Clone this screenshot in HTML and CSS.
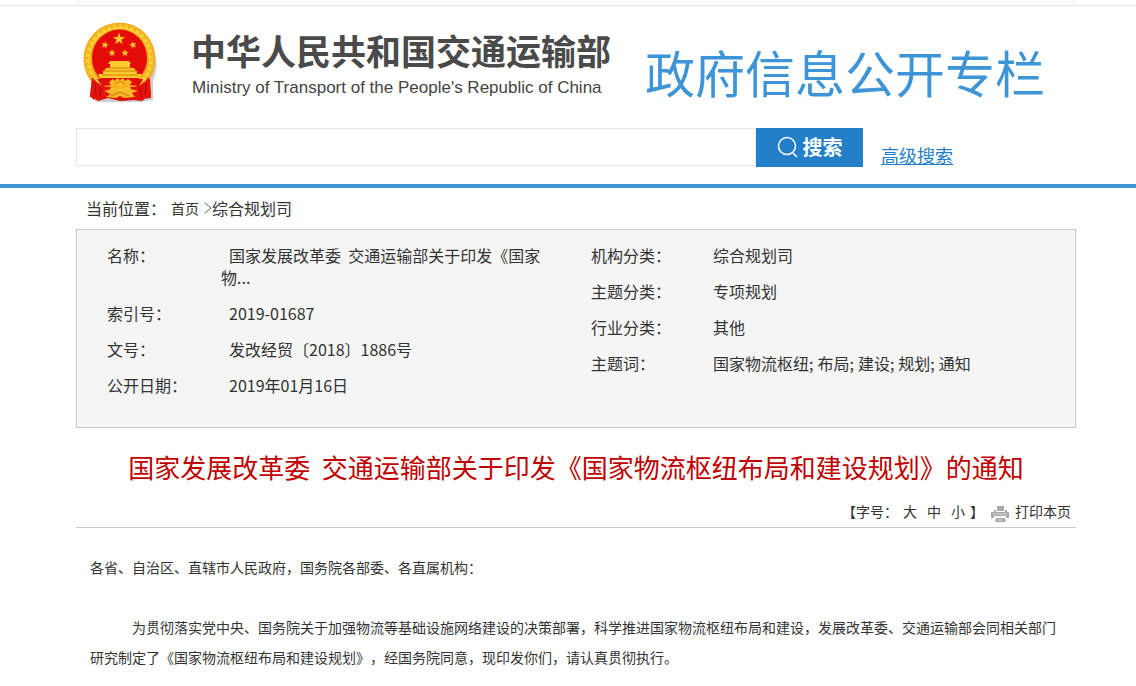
FILE: index.html
```
<!DOCTYPE html>
<html lang="zh-CN">
  <head>
    <meta charset="UTF-8" />
    <meta name="viewport" content="width=device-width, initial-scale=1.0" />
    <title>国家物流枢纽布局和建设规划</title>
    <link rel="stylesheet" href="styles.css" />
  </head>
  <body>
    <div class="topLine">
      <div class="wrap"><div class="topBar"></div></div>
    </div>

    <header class="header">
      <div class="wrap">
        <div class="brand">
          <svg class="emblem" viewBox="0 0 78 84" aria-hidden="true">
            <defs>
              <radialGradient id="gold">
                <stop offset="0.75" stop-color="#f0930f" />
                <stop offset="0.87" stop-color="#ffd93a" />
                <stop offset="1" stop-color="#eda315" />
              </radialGradient>
              <path id="star" d="M0-5 1.2-1.6 4.8-1.5 1.9.6 2.9 4 0 2-2.9 4-1.9.6-4.8-1.5-1.2-1.6z" />
            </defs>
            <path d="M73 34Q77 46 71 60L71 79 58 81 14 81 12 78 40 70 66 60z" fill="#cfcfcf" />
            <path d="M10 58 8 76 12 77 16 80 26 77 38 80 52 79 60 80 64 77 69 77 68 58z" fill="#dc0f0b" />
            <ellipse cx="37.500" cy="38" rx="36" ry="36.500" fill="url(#gold)" />
            <ellipse cx="37.500" cy="38" rx="32" ry="33" fill="none" stroke="#d98209" stroke-width="2" stroke-dasharray="2 4" opacity="0.5" />
            <ellipse cx="37.500" cy="37" rx="27.500" ry="28.500" fill="#e50b08" />
            <g fill="#ffc928">
              <use href="#star" transform="translate(37 18) scale(1.300)" />
              <use href="#star" transform="translate(23 24) scale(.800) rotate(15)" />
              <use href="#star" transform="translate(51 24) scale(.800) rotate(-15)" />
              <use href="#star" transform="translate(30 32) scale(.800)" />
              <use href="#star" transform="translate(43 32) scale(.800)" />
            </g>
            <path d="M28 40h19l2 3H26zM28 43h20v4H28zM24 47h28l2 3H22zM21 50h34v3H21zM16 53h44l-2 4H18z" fill="#ffcb2c" />
            <path d="M26 47h24M22 50h32M20 54h36" stroke="#d77b0b" fill="none" />
            <path d="M15 58 20 65 31 64 38 67 46 64 57 65 61 58z" fill="#e50b08" />
            <path d="M10 56Q17 66 29 66L25 77Q16 74 12 79L8 75zM67 56Q60 66 48 66L53 77Q61 74 65 78L69 75z" fill="#e6130d" />
            <path d="M13 62 14 74M19 66 18 76M64 62 63 74M58 66 59 76" stroke="#a50707" fill="none" />
            <path d="M27 61 31 58 33 60 35 57 38 59 41 57 43 60 46 58 50 61 47 65 41 66 38 68 35 66 29 65z" fill="#f9b823" />
            <path d="M22 70Q30 67 35 69L38 70 42 69Q49 67 56 70L50 72 53 76 42 77 38 75 34 77 24 76 29 73z" fill="#f9b823" />
            <path d="M33 63 38 60 43 63M29 75 38 71 47 75" stroke="#c87810" fill="none" />
          </svg>
          <div class="brandText">
            <div class="brandCn">中华人民共和国交通运输部</div>
            <div class="brandEn">Ministry of Transport of the People's Republic of China</div>
          </div>
          <div class="column">政府信息公开专栏</div>
        </div>

        <form class="search" action="" method="get">
          <input class="searchInput" type="text" name="q" aria-label="搜索" />
          <button class="searchButton" type="submit">
            <svg class="searchIcon" viewBox="0 0 22 22" aria-hidden="true">
              <circle cx="10" cy="10" r="8.500" />
              <path d="M15.500 16.500 20 21" />
            </svg>
            <span>搜索</span>
          </button>
          <a class="advanced" href="#">高级搜索</a>
        </form>
      </div>
    </header>

    <main class="wrap">
      <nav class="crumbs">
        <span>当前位置：</span>
        <a class="home" href="#">首页</a>
        <svg class="arrow" viewBox="0 0 8 14" aria-hidden="true"><path d="M1 2 7 7 1 12" /></svg>
        <a href="#">综合规划司</a>
      </nav>

      <div class="info">
        <dl class="infoList infoMain">
          <dt>名称：</dt>
          <dd>国家发展改革委&nbsp; 交通运输部关于印发《国家物...</dd>
          <dt>索引号：</dt>
          <dd>2019-01687</dd>
          <dt>文号：</dt>
          <dd>发改经贸〔2018〕1886号</dd>
          <dt>公开日期：</dt>
          <dd>2019年01月16日</dd>
        </dl>
        <dl class="infoList">
          <dt>机构分类：</dt>
          <dd>综合规划司</dd>
          <dt>主题分类：</dt>
          <dd>专项规划</dd>
          <dt>行业分类：</dt>
          <dd>其他</dd>
          <dt>主题词：</dt>
          <dd class="keywords">
            <span>国家物流枢纽;</span>
            <span>布局;</span>
            <span>建设;</span>
            <span>规划;</span>
            <span>通知</span>
          </dd>
        </dl>
      </div>

      <article>
        <h1 class="title">国家发展改革委&nbsp; 交通运输部关于印发《国家物流枢纽布局和建设规划》的通知</h1>
        <div class="tools">
          <span>【字号：</span>
          <div class="sizes">
            <a href="#">大</a>
            <a href="#">中</a>
            <a href="#">小</a>
          </div>
          <span>】</span>
          <a class="print" href="#">
            <svg class="printIcon" viewBox="0 0 18 16" aria-hidden="true">
              <path d="M6 0h7v5H6zM0 6h3V4h2v2h9V4h2v2h2v6h-3v-2H3v2H0zM5 12h9l1 4H4z" fill="#aaa" />
              <path d="M2 8h14M7 14h5" stroke="#ddd" fill="none" />
            </svg>
            <span>打印本页</span>
          </a>
        </div>
        <div class="content">
          <p>各省、自治区、直辖市人民政府，国务院各部委、各直属机构：</p>
          <p class="indent">为贯彻落实党中央、国务院关于加强物流等基础设施网络建设的决策部署，科学推进国家物流枢纽布局和建设，发展改革委、交通运输部会同相关部门研究制定了《国家物流枢纽布局和建设规划》，经国务院同意，现印发你们，请认真贯彻执行。</p>
        </div>
      </article>
    </main>
  </body>
</html>
```
FILE: styles.css
```
* {
  box-sizing: border-box;
}
body {
  margin: 0;
  background: #fff;
  color: #333;
  font-family: "Noto Sans CJK SC", sans-serif;
  font-size: 16px;
  line-height: 22px;
  text-spacing-trim: space-all;
}
a {
  color: #333;
  text-decoration: none;
}
.wrap {
  max-width: 1016px;
  margin: 0 auto;
  padding-left: 16px;
}
.topLine {
  border-bottom: 1px solid #e6e6e6;
}
.topBar {
  height: 5px;
  background: #fafafa;
}

/* header */
.header {
  border-bottom: 4px solid #3d94d6;
  padding: 15px 0 17px;
}
.brand {
  display: flex;
  align-items: center;
  height: 84px;
  padding-left: 6px;
}
.emblem {
  width: 78px;
  height: 84px;
  flex: none;
}
.brandText {
  margin-left: 31px;
  white-space: nowrap;
}
.brandCn {
  color: #4a4a4a;
  font-size: 35px;
  font-weight: bold;
  line-height: 50px;
}
.brandEn {
  padding-left: 1px;
  color: #444;
  font-family: "Liberation Sans", Arial, sans-serif;
  font-size: 17px;
  line-height: 26px;
}
.column {
  margin: 16px 0 0 34px;
  color: #3d94d6;
  font-size: 50px;
  line-height: 56px;
  white-space: nowrap;
}
.search {
  display: flex;
  align-items: flex-start;
  margin-top: 23px;
}
.searchInput {
  width: 68%;
  height: 38px;
  padding: 0 10px;
  border: 1px solid #e6e6e6;
  font-size: 16px;
}
.searchButton {
  display: flex;
  align-items: center;
  justify-content: center;
  gap: 4px;
  width: 107px;
  height: 39px;
  padding: 0 0 2px;
  border: 0;
  background: #2380c8;
  color: #fff;
  font-family: inherit;
  font-size: 20px;
  font-weight: bold;
  cursor: pointer;
}
.searchIcon {
  width: 22px;
  height: 22px;
  fill: none;
  stroke: #fff;
  stroke-width: 1.5;
}
.advanced {
  margin: 16px 0 0 18px;
  color: #2380c8;
  font-size: 18px;
  text-decoration: underline;
}

/* breadcrumb */
.crumbs {
  display: flex;
  align-items: center;
  padding: 9px 0 10px 10px;
}
.home {
  margin: 0 5px;
  font-size: 14px;
}
.arrow {
  width: 8px;
  height: 14px;
  fill: none;
  stroke: #4a5a68;
}

/* document info */
.info {
  display: flex;
  padding: 14px 30px 31px;
  border: 1px solid #c9cacb;
  background: #f5f5f5;
}
.infoList {
  display: grid;
  grid-template-columns: 122px 1fr;
  align-content: start;
  row-gap: 14px;
  flex: 1;
  margin: 0;
}
.infoMain {
  grid-template-columns: 114px 1fr;
  flex: 0 0 484px;
  padding-right: 40px;
}
.infoList dd {
  margin: 0;
}
.infoMain dd {
  text-indent: 8px;
}
.keywords {
  display: flex;
  flex-wrap: wrap;
  column-gap: 4px;
}

/* article */
.title {
  margin: 19px 0 0;
  color: #c00000;
  font-size: 26px;
  font-weight: normal;
  line-height: 40px;
  text-align: center;
}
.tools {
  display: flex;
  justify-content: flex-end;
  align-items: center;
  padding: 13px 5px 5px 0;
  border-bottom: 1px solid #c9cacb;
  font-size: 14px;
}
.sizes {
  display: flex;
  gap: 10px;
  margin: 0 5px;
}
.print {
  display: flex;
  align-items: center;
  gap: 6px;
  margin-left: 7px;
}
.printIcon {
  width: 18px;
  height: 16px;
  margin-top: 6px;
}
.content {
  padding: 24px 14px 0;
  font-size: 14px;
  line-height: 30px;
}
.content p {
  margin: 0 0 30px;
}
.content .indent {
  margin-bottom: 0;
  text-indent: 3em;
}
```
